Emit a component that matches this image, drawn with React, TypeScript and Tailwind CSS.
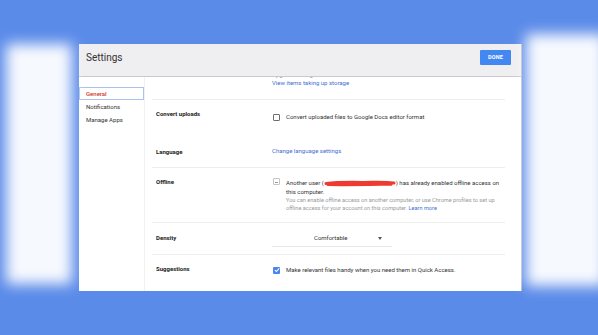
import React from 'react';

const font = { fontFamily: 'Roboto, "Liberation Sans", Arial, sans-serif' };

const Checkbox = ({ state }: { state: 'off' | 'on' | 'disabled' }) => {
  if (state === 'on') {
    return (
      <span className="flex h-[7px] w-[7px] shrink-0 items-center justify-center rounded-[1px] bg-[#4a86ee]">
        <svg width="6" height="6" viewBox="0 0 10 10">
          <path d="M1.5 5.2 L4 7.6 L8.6 2.4" fill="none" stroke="#fff" strokeWidth="1.8" />
        </svg>
      </span>
    );
  }
  if (state === 'disabled') {
    return (
      <span className="flex h-[7px] w-[7px] shrink-0 items-end justify-center rounded-[1px] border border-[#c4c4c4] pb-[1px]">
        <span className="h-[1px] w-[3px] bg-[#9a9a9a]" />
      </span>
    );
  }
  return <span className="h-[7px] w-[7px] shrink-0 rounded-[1px] border border-[#6f6f6f]" />;
};

const Redaction = () => (
  <svg width="72" height="8" viewBox="0 0 72 8" className="inline-block align-middle">
    <path
      d="M2 4.5 C14 3 26 3.2 38 3.4 C50 3.5 58 2.6 70 4 M4 5.6 C20 6 40 5.6 67 5.2"
      fill="none"
      stroke="#ee3a30"
      strokeWidth="3"
      strokeLinecap="round"
    />
  </svg>
);

export default function App() {
  return (
    <div className="relative flex h-[335px] w-[598px] overflow-hidden bg-[#5b8be9]" style={font}>
      {/* blurred windows behind the dialog */}
      <div className="ml-[6px] mt-[44px] h-[240px] w-[66px] shrink-0 bg-white/95 blur-[7px]" />

      {/* Dialog */}
      <div className="ml-[7px] mt-[44px] flex h-[247px] w-[443px] shrink-0 flex-col border-r border-[#b9bcc6] bg-white">
        {/* Header */}
        <div className="flex h-[33px] shrink-0 items-center justify-between border-b border-[#c9c9cf] bg-[#efeef0] pl-[7px] pr-[10px]">
          <span className="-mt-[6px] text-[10px] text-[#333]">Settings</span>
          <button className="-mt-[6px] h-[15px] w-[31px] rounded-[1px] bg-[#4388f2] text-[5.5px] font-bold tracking-[0.2px] text-white">
            DONE
          </button>
        </div>

        {/* Body */}
        <div className="flex min-h-0 flex-1">
          {/* Sidebar */}
          <div className="w-[66px] shrink-0 border-r border-[#f1f1f1] pt-[10px] text-[6px] text-[#333]">
            <div className="flex h-[13px] items-center border border-[#aac3ee] px-[6px] font-medium text-[#d2362b]">General</div>
            <div className="flex h-[13px] items-center px-[7px]">Notifications</div>
            <div className="flex h-[13px] items-center px-[7px]">Manage Apps</div>
          </div>

          {/* Content */}
          <div className="min-w-0 flex-1 overflow-hidden pl-[7px] pr-[16px] text-[6px] text-[#333]">
            <div className="-mt-[6px]">
              {/* Storage */}
              <div className="flex h-[29px] items-start border-b border-[#eeeeee]">
                <div className="w-[120px] shrink-0" />
                <div className="leading-[8px] text-[#3f6fcf]">
                  <div>Upgrade storage</div>
                  <div>View items taking up storage</div>
                </div>
              </div>

              {/* Convert uploads */}
              <div className="flex h-[33px] items-start pt-[10px]">
                <div className="w-[120px] shrink-0 pl-[4px] font-bold leading-[8px] text-[#222]">Convert uploads</div>
                <div className="mt-[3px] flex items-center gap-[6px] pl-[1px]">
                  <Checkbox state="off" />
                  <span className="leading-[8px]">Convert uploaded files to Google Docs editor format</span>
                </div>
              </div>

              {/* Language */}
              <div className="flex h-[35px] items-start border-b border-[#eeeeee] pt-[15px]">
                <div className="w-[120px] shrink-0 pl-[4px] font-bold leading-[8px] text-[#222]">Language</div>
                <div className="-mt-[1px] leading-[8px] text-[#3f6fcf]">Change language settings</div>
              </div>

              {/* Offline */}
              <div className="flex h-[55px] items-start border-b border-[#eeeeee] pt-[10px]">
                <div className="w-[120px] shrink-0 pl-[4px] font-bold leading-[8px] text-[#222]">Offline</div>
                <div className="flex items-start gap-[6px] pl-[1px]">
                  <Checkbox state="disabled" />
                  <div className="w-[226px] whitespace-nowrap">
                    <div className="leading-[9px]">
                      Another user (<Redaction />) has already enabled offline access on
                      <br />
                      this computer.
                    </div>
                    <div className="text-[5.6px] leading-[8px] text-[#9a9a9a]">
                      You can enable offline access on another computer, or use Chrome profiles to set up
                      <br />
                      offline access for your account on this computer. <span className="text-[#3f6fcf]">Learn more</span>
                    </div>
                  </div>
                </div>
              </div>

              {/* Density */}
              <div className="flex h-[32px] items-start border-b border-[#eeeeee] pt-[11px]">
                <div className="w-[120px] shrink-0 pl-[4px] font-bold leading-[8px] text-[#222]">Density</div>
                <div className="flex h-[13px] w-[120px] items-start border-b border-[#e6e6e6] pl-[42px]">
                  <span className="leading-[8px]">Comfortable</span>
                  <span className="ml-auto mr-[10px] mt-[3px] h-0 w-0 border-x-[2px] border-t-[3px] border-x-transparent border-t-[#555]" />
                </div>
              </div>

              {/* Suggestions */}
              <div className="flex h-[40px] items-start pt-[10px]">
                <div className="w-[120px] shrink-0 pl-[4px] font-bold leading-[8px] text-[#222]">Suggestions</div>
                <div className="mt-[1px] flex items-center gap-[6px] pl-[1px]">
                  <Checkbox state="on" />
                  <span className="leading-[8px]">Make relevant files handy when you need them in Quick Access.</span>
                </div>
              </div>
            </div>
          </div>
        </div>
      </div>

      <div className="ml-[4px] mt-[34px] h-[252px] w-[80px] shrink-0 bg-white/95 blur-[7px]" />
    </div>
  );
}
